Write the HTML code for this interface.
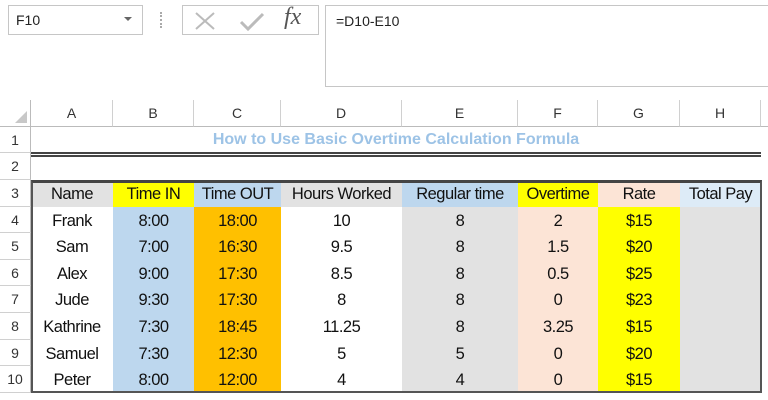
<!DOCTYPE html><html><head><style>
body{margin:0;width:768px;height:400px;background:#fff;position:relative;overflow:hidden;font-family:"Liberation Sans",sans-serif;}
.a{position:absolute;box-sizing:border-box}
.ch{position:absolute;top:100px;height:27px;line-height:27px;text-align:center;font-size:14px;color:#333;border-right:1px solid #d0d0d0;border-bottom:1px solid #bbb;background:#fff;box-sizing:border-box}
.rh{position:absolute;left:0;width:31px;text-align:center;font-size:14px;color:#333;border-bottom:1px solid #d0d0d0;border-right:1px solid #bbb;box-sizing:border-box}
.c{position:absolute;text-align:center;font-size:16.5px;color:#111;white-space:nowrap;overflow:hidden;letter-spacing:-0.5px}
</style></head><body>
<div class="a" style="left:8px;top:5px;width:135px;height:30px;border:1px solid #c6c6c6;font-size:14px;line-height:28px;padding-left:7px;color:#222">F10</div>
<div class="a" style="left:124px;top:17px;width:0;height:0;border-left:4px solid transparent;border-right:4px solid transparent;border-top:4px solid #666"></div>
<div class="a" style="left:160px;top:12px;width:2px;height:16px;border-left:2px dotted #aaa"></div>
<div class="a" style="left:182px;top:5px;width:137px;height:30px;border:1px solid #c6c6c6"></div>
<svg class="a" style="left:193px;top:10px" width="26" height="22"><path d="M3 3L21 19M21 3L3 19" stroke="#bbb" stroke-width="2"/></svg>
<svg class="a" style="left:238px;top:10px" width="28" height="22"><path d="M3 12L10 19L25 4" stroke="#bbb" stroke-width="3" fill="none"/></svg>
<div class="a" style="left:284px;top:4px;font:italic 24px 'Liberation Serif',serif;color:#555">fx</div>
<div class="a" style="left:325px;top:5px;width:450px;height:82px;border:1px solid #c6c6c6;font-size:14px;padding:7px 0 0 10px;color:#222">=D10-E10</div>
<div class="a" style="left:0;top:100px;width:31px;height:27px;border-right:1px solid #bbb;border-bottom:1px solid #bbb"></div>
<svg class="a" style="left:14px;top:110px" width="14" height="14"><path d="M13 1V13H1Z" fill="#c8c8c8"/></svg>
<div class="ch" style="left:31px;width:82px">A</div><div class="ch" style="left:113px;width:81px">B</div><div class="ch" style="left:194px;width:87px">C</div><div class="ch" style="left:281px;width:121px">D</div><div class="ch" style="left:402px;width:116px">E</div><div class="ch" style="left:518px;width:80px">F</div><div class="ch" style="left:598px;width:82px">G</div><div class="ch" style="left:680px;width:81px">H</div><div class="ch" style="left:761px;width:20px"></div>
<div class="rh" style="top:127px;height:26px;line-height:26px">1</div>
<div class="rh" style="top:153px;height:27px;line-height:27px">2</div>
<div class="c" style="left:31px;top:127px;width:730px;line-height:26px;font-weight:bold;color:#9dc3e6;font-size:16px;letter-spacing:0">How to Use Basic Overtime Calculation Formula</div>
<div class="a" style="left:31px;top:152px;width:730px;height:5px;border-top:2px solid #444;border-bottom:2px solid #444"></div>
<div id="t"></div>
<div class="a" style="left:31px;top:180px;width:731px;height:213px;border:2px solid #555;border-top:3px solid #444"></div>
<script>
(function(){
var cols=[[31,82],[113,81],[194,87],[281,121],[402,116],[518,80],[598,82],[680,81]];
var hdr=["Name","Time IN","Time OUT","Hours Worked","Regular time","Overtime","Rate","Total Pay"];
var hbg=["#e2e2e2","#ffff00","#bdd7ee","#e2e2e2","#bdd7ee","#ffff00","#fce4d6","#ddebf7"];
var bbg=["#fff","#bdd7ee","#ffc000","#fff","#e2e2e2","#fce4d6","#ffff00","#e2e2e2"];
var d=[["Frank","8:00","18:00","10","8","2","$15",""],["Sam","7:00","16:30","9.5","8","1.5","$20",""],["Alex","9:00","17:30","8.5","8","0.5","$25",""],["Jude","9:30","17:30","8","8","0","$23",""],["Kathrine","7:30","18:45","11.25","8","3.25","$15",""],["Samuel","7:30","12:30","5","5","0","$20",""],["Peter","8:00","12:00","4","4","0","$15",""]];
var h="";var rh=26.6;
for(var r=0;r<8;r++){var y=180+r*rh;
h+='<div class="rh" style="top:'+y+'px;height:'+rh+'px;line-height:'+rh+'px">'+(r+3)+'</div>';
for(var c=0;c<8;c++){var t=r==0?hdr[c]:d[r-1][c];var bg=r==0?hbg[c]:bbg[c];
h+='<div class="c" style="left:'+cols[c][0]+'px;top:'+y+'px;width:'+cols[c][1]+'px;height:'+rh+'px;line-height:'+(rh+2)+'px;background:'+bg+'">'+t+'</div>';}}
document.getElementById("t").innerHTML=h;
})();
</script>
</body></html>
